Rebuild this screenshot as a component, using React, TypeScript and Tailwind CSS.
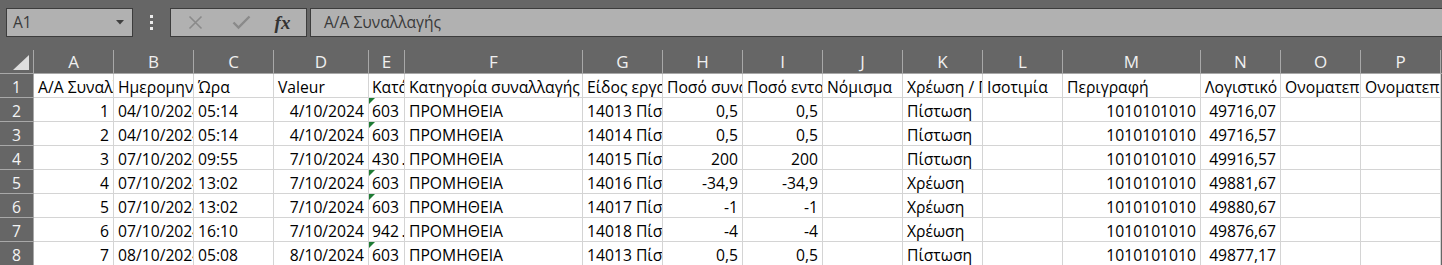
import React from 'react';

type Col = { letter: string; w: string };

const cols: Col[] = [
  { letter: 'A', w: 'w-[80px]' },
  { letter: 'B', w: 'w-[80px]' },
  { letter: 'C', w: 'w-[80px]' },
  { letter: 'D', w: 'w-[95px]' },
  { letter: 'E', w: 'w-[36px]' },
  { letter: 'F', w: 'w-[178px]' },
  { letter: 'G', w: 'w-[80px]' },
  { letter: 'H', w: 'w-[80px]' },
  { letter: 'I', w: 'w-[80px]' },
  { letter: 'J', w: 'w-[80px]' },
  { letter: 'K', w: 'w-[80px]' },
  { letter: 'L', w: 'w-[80px]' },
  { letter: 'M', w: 'w-[138px]' },
  { letter: 'N', w: 'w-[80px]' },
  { letter: 'O', w: 'w-[80px]' },
  { letter: 'P', w: 'w-[80px]' },
];

// r = right aligned (numbers), tri = number stored as text marker
type Cell = { t?: string; r?: boolean; tri?: boolean };

const header: Cell[] = [
  { t: 'A/A Συναλλαγής' },
  { t: 'Ημερομηνία' },
  { t: 'Ώρα' },
  { t: 'Valeur' },
  { t: 'Κατάσταση' },
  { t: 'Κατηγορία συναλλαγής' },
  { t: 'Είδος εργασίας' },
  { t: 'Ποσό συναλλαγής' },
  { t: 'Ποσό εντολής' },
  { t: 'Νόμισμα' },
  { t: 'Χρέωση / Πίστωση' },
  { t: 'Ισοτιμία' },
  { t: 'Περιγραφή' },
  { t: 'Λογιστικό υπόλοιπο' },
  { t: 'Ονοματεπώνυμο' },
  { t: 'Ονοματεπώνυμο' },
];

const data = [
  ['1', '04/10/2024', '05:14', '4/10/2024', '603', '14013 Πίστωση', '0,5', '0,5', 'Πίστωση', '49716,07'],
  ['2', '04/10/2024', '05:14', '4/10/2024', '603', '14014 Πίστωση', '0,5', '0,5', 'Πίστωση', '49716,57'],
  ['3', '07/10/2024', '09:55', '7/10/2024', '430\u2009.', '14015 Πίστωση', '200', '200', 'Πίστωση', '49916,57'],
  ['4', '07/10/2024', '13:02', '7/10/2024', '603', '14016 Πίστωση', '-34,9', '-34,9', 'Χρέωση', '49881,67'],
  ['5', '07/10/2024', '13:02', '7/10/2024', '603', '14017 Πίστωση', '-1', '-1', 'Χρέωση', '49880,67'],
  ['6', '07/10/2024', '16:10', '7/10/2024', '942\u2009.', '14018 Πίστωση', '-4', '-4', 'Χρέωση', '49876,67'],
  ['7', '08/10/2024', '05:08', '8/10/2024', '603', '14013 Πίστωση', '0,5', '0,5', 'Πίστωση', '49877,17'],
];

function toCells(d: string[]): Cell[] {
  return [
    { t: d[0], r: true },
    { t: d[1] },
    { t: d[2] },
    { t: d[3], r: true },
    { t: d[4], tri: d[4] === '603' },
    { t: 'ΠΡΟΜΗΘΕΙΑ' },
    { t: d[5] },
    { t: d[6], r: true },
    { t: d[7], r: true },
    {},
    { t: d[8] },
    {},
    { t: '1010101010', r: true },
    { t: d[9], r: true },
    {},
    {},
  ];
}

function NameBox() {
  return (
    <div className="flex items-center justify-between h-[29px] w-[127px] border border-[#3c3c3c] bg-[#b1b1b1] pl-[6px] pr-[8px]">
      <span className="text-[15.5px] text-[#3a3a3a] leading-none">A1</span>
      <svg width="8" height="5" viewBox="0 0 8 5">
        <polygon points="0,0 8,0 4,4.5" fill="#404040" />
      </svg>
    </div>
  );
}

function FormulaButtons() {
  return (
    <div className="flex items-center h-[29px] w-[137px] border border-[#3c3c3c] bg-[#b1b1b1]">
      <div className="w-[44px] flex justify-center pl-[4px]">
        <svg width="15" height="15" viewBox="0 0 15 15">
          <path d="M1.5 1.5 L13.5 13.5 M13.5 1.5 L1.5 13.5" stroke="#8a8a8a" strokeWidth="1.6" />
        </svg>
      </div>
      <div className="w-[48px] flex justify-center pl-[4px]">
        <svg width="19" height="15" viewBox="0 0 19 15">
          <path d="M1.5 7.5 L6.5 12.5 L17.5 1.5" stroke="#8a8a8a" strokeWidth="2.4" fill="none" />
        </svg>
      </div>
      <div className="flex-1 flex justify-center pr-[4px]">
        <span className="font-['Liberation_Serif',serif] italic font-bold text-[19px] leading-none text-[#333]">
          fx
        </span>
      </div>
    </div>
  );
}

function TopBar() {
  return (
    <div className="flex items-start h-[50px] pt-[8px] pl-[6px]">
      <NameBox />
      <div className="w-[37px] h-[29px] flex flex-col items-center justify-center gap-[3px]">
        <div className="w-[3px] h-[3px] bg-[#ececec]" />
        <div className="w-[3px] h-[3px] bg-[#ececec]" />
        <div className="w-[3px] h-[3px] bg-[#ececec]" />
      </div>
      <FormulaButtons />
      <div className="ml-[3px] flex-1 -mr-[2px] h-[29px] border border-[#3c3c3c] bg-[#b1b1b1] flex items-center pl-[13px]">
        <span className="text-[15.6px] text-[#3a3a3a] leading-none">A/A Συναλλαγής</span>
      </div>
    </div>
  );
}

function ColumnHeader() {
  return (
    <div className="flex h-[24px] border-b border-[#a8a8a8]">
      <div className="w-[34px] h-full border-r border-[#a8a8a8] flex items-end justify-end pr-[3px] pb-[2px]">
        <svg width="17" height="16" viewBox="0 0 17 16">
          <polygon points="16,0 16,15 0,15" fill="#dedede" />
        </svg>
      </div>
      {cols.map((c) => (
        <div
          key={c.letter}
          className={`${c.w} shrink-0 h-full border-r border-[#a8a8a8] text-center text-[17px] leading-[23px] text-[#f0f0f0]`}
        >
          {c.letter}
        </div>
      ))}
    </div>
  );
}

function Row({ n, cells }: { n: number; cells: Cell[] }) {
  return (
    <div className="flex h-[24px]">
      <div className="w-[34px] shrink-0 h-full border-r border-b border-[#a8a8a8] bg-[#666] text-center text-[#f4f4f4] text-[15.7px] leading-[26px] overflow-hidden">
        {n}
      </div>
      {cells.map((c, i) => (
        <div
          key={i}
          className={`${cols[i].w} shrink-0 relative h-full bg-white border-r border-b border-[#d4d4d4] ${
            i === 4 ? 'pl-[3px] pr-0' : 'px-[4px]'
          } overflow-hidden whitespace-nowrap text-[15.7px] leading-[26px] text-black ${
            c.r ? 'text-right' : 'text-left'
          }`}
        >
          {c.tri && (
            <svg className="absolute top-0 left-0" width="6" height="6" viewBox="0 0 6 6">
              <polygon points="0,0 6,0 0,6" fill="#1e7b34" />
            </svg>
          )}
          {c.t}
        </div>
      ))}
    </div>
  );
}

export default function App() {
  return (
    <div className="w-[1442px] h-[265px] overflow-hidden bg-[#666666] font-['Open_Sans',sans-serif]">
      <TopBar />
      <ColumnHeader />
      <Row n={1} cells={header} />
      {data.map((d, i) => (
        <Row key={i} n={i + 2} cells={toCells(d)} />
      ))}
    </div>
  );
}
